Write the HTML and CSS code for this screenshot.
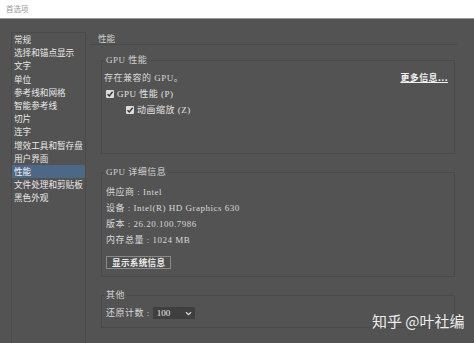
FILE: index.html
```html
<!DOCTYPE html>
<html lang="zh-CN">
<head>
  <meta charset="UTF-8" />
  <meta name="viewport" content="width=device-width, initial-scale=1.0"/>
  <title>首选项</title>
  <link rel="stylesheet" href="styles.css">
</head>
<body>
  <div class="titlebar">首选项</div>

  <div class="main">
    <ul class="sidebar">
      <li>常规</li>
      <li>选择和锚点显示</li>
      <li>文字</li>
      <li>单位</li>
      <li>参考线和网格</li>
      <li>智能参考线</li>
      <li>切片</li>
      <li>连字</li>
      <li>增效工具和暂存盘</li>
      <li>用户界面</li>
      <li class="active">性能</li>
      <li>文件处理和剪贴板</li>
      <li>黑色外观</li>
    </ul>

    <div class="content">
      <div class="page-title">性能</div>

      <fieldset class="group group-gpu">
        <legend>GPU 性能</legend>
        <div class="row row-split">
          <span>存在兼容的 GPU。</span>
          <a class="more-link">更多信息...</a>
        </div>
        <div class="row">
          <span class="check">
            <svg viewBox="0 0 8 8" width="8" height="8"><path d="M1.5 4.2 L3.3 6 L6.6 1.8" fill="none" stroke="#333" stroke-width="1.4"/></svg>
          </span>
          <span class="check-label">GPU 性能 (P)</span>
        </div>
        <div class="row row-indent">
          <span class="check">
            <svg viewBox="0 0 8 8" width="8" height="8"><path d="M1.5 4.2 L3.3 6 L6.6 1.8" fill="none" stroke="#333" stroke-width="1.4"/></svg>
          </span>
          <span class="check-label">动画缩放 (Z)</span>
        </div>
      </fieldset>

      <fieldset class="group group-detail">
        <legend>GPU 详细信息</legend>
        <div class="row">供应商 : Intel</div>
        <div class="row">设备 : Intel(R) HD Graphics 630</div>
        <div class="row">版本 : 26.20.100.7986</div>
        <div class="row">内存总量 : 1024 MB</div>
        <button class="sys-btn">显示系统信息</button>
      </fieldset>

      <fieldset class="group group-other">
        <legend>其他</legend>
        <div class="row">
          <span>还原计数 :</span>
          <span class="select">
            <span>100</span>
            <svg viewBox="0 0 8 6" width="7" height="5"><path d="M1 1.5 L4 4.5 L7 1.5" fill="none" stroke="#ddd" stroke-width="1.4"/></svg>
          </span>
        </div>
      </fieldset>
    </div>
  </div>

  <div class="watermark">知乎 @叶社编</div>
</body>
</html>
```

FILE: styles.css
```css
body {
  margin: 0;
  width: 474px;
  height: 343px;
  overflow: hidden;
  background: #535353;
  font-family: "Liberation Serif", "Noto Sans CJK SC", serif;
  font-size: 9px;
  color: #d8d8d8;
  position: relative;
}

.titlebar {
  height: 18px;
  line-height: 18px;
  background: #ffffff;
  border-bottom: 1px solid #9c9c9c;
  padding-left: 6px;
  font-family: "Noto Sans CJK SC", sans-serif;
  font-size: 7.5px;
  color: #9a9a9a;
}

.main {
  display: flex;
  padding: 13px 0 0 11px;
}

.sidebar {
  list-style: none;
  margin: 0;
  padding: 0;
  width: 73px;
  height: 320px;
  border: 1px solid #4a4a4a;
  font-family: "Noto Sans CJK SC", sans-serif;
  font-size: 8.6px;
  color: #e8e8e8;
}

.sidebar li {
  line-height: 13.2px;
  padding-left: 2px;
  white-space: nowrap;
}

.sidebar li.active {
  background: #4d6786;
  color: #f2f2f2;
}

.content {
  margin-left: 3px;
  width: 368px;
  display: flex;
  flex-direction: column;
}

.page-title {
  height: 12px;
  line-height: 12px;
  padding-left: 9px;
  border-bottom: 1px solid #4a4a4a;
  font-family: "Noto Sans CJK SC", sans-serif;
  font-size: 8.6px;
  color: #cfcfcf;
}

.group {
  margin: 0 2px 0 12px;
  border: 1px solid #4a4a4a;
  padding: 0 6px 0 2px;
  min-width: 0;
  letter-spacing: 0.5px;
}

.group legend {
  padding: 0 2px;
  line-height: 12px;
  color: #d0d0d0;
}

.group-gpu {
  margin-top: 9px;
  padding-top: 4px;
  padding-bottom: 35px;
}

.group-detail {
  margin-top: 12px;
  padding-top: 6px;
  padding-bottom: 7px;
}

.group-other {
  margin-top: 12px;
  padding-top: 4px;
  padding-bottom: 6px;
}

.row {
  height: 16px;
  line-height: 16px;
  display: flex;
  align-items: center;
  padding-left: 2px;
  white-space: nowrap;
}

.row-split {
  justify-content: space-between;
  padding-left: 0;
}

.row-indent {
  padding-left: 22px;
}

.more-link {
  font-family: "Noto Sans CJK SC", sans-serif;
  font-weight: bold;
  color: #f0f0f0;
  text-decoration: underline;
  letter-spacing: 0.4px;
}

.check {
  width: 8px;
  height: 8px;
  background: #dcdcdc;
  border-radius: 1px;
  display: flex;
  margin-right: 3px;
}

.check-label {
  color: #e4e4e4;
}

.sys-btn {
  margin: 8px 0 0 2px;
  align-self: flex-start;
  height: 13px;
  padding: 0 5px;
  background: #505050;
  border: 1px solid #8a8a8a;
  color: #ececec;
  font-family: "Noto Sans CJK SC", sans-serif;
  font-size: 8.6px;
  font-weight: bold;
  line-height: 11px;
  letter-spacing: 0.3px;
}

.select {
  margin-left: 3px;
  width: 42px;
  height: 12px;
  background: #3f3f3f;
  display: flex;
  align-items: center;
  justify-content: space-between;
  padding: 0 3px 0 4px;
  box-sizing: border-box;
  color: #ececec;
  letter-spacing: 0;
}

.watermark {
  position: absolute;
  left: 372px;
  top: 312px;
  font-family: "Noto Sans CJK SC", sans-serif;
  font-size: 15px;
  line-height: 18px;
  color: rgba(255, 255, 255, 0.92);
}
```
